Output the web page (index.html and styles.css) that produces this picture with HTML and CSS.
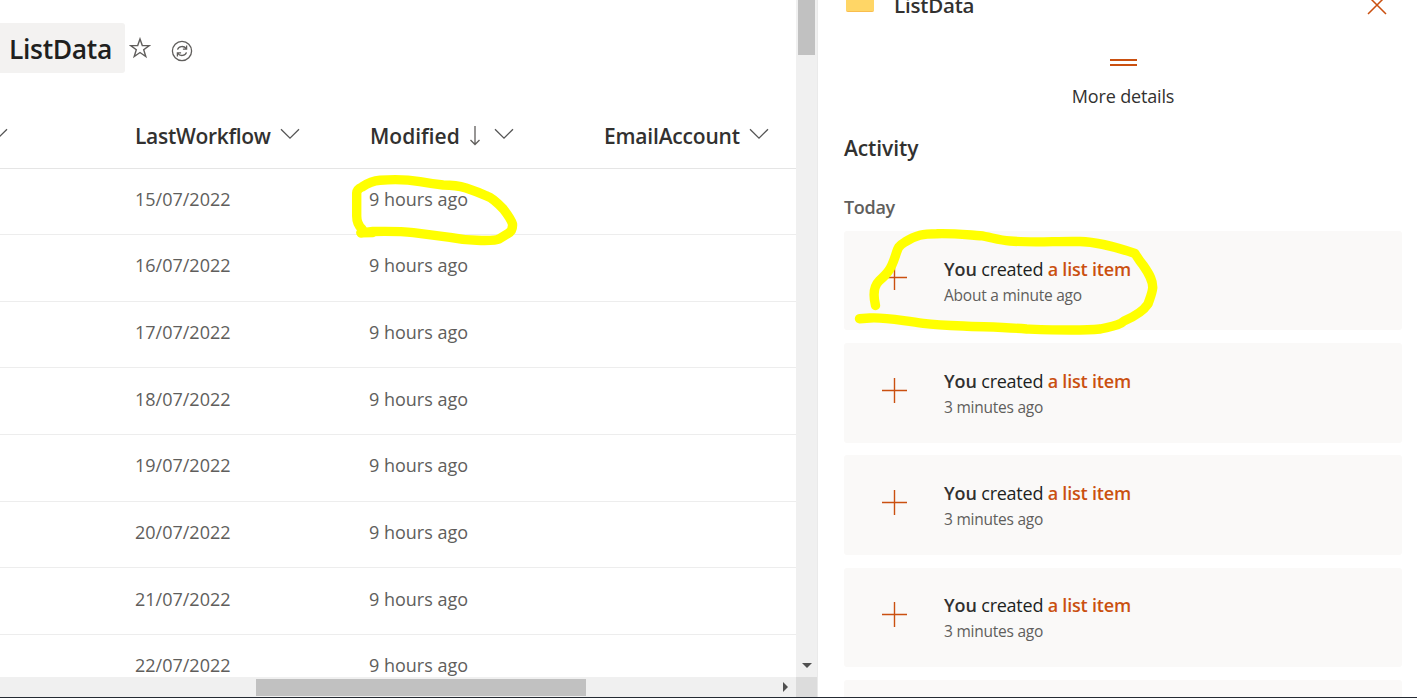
FILE: index.html
```
<!DOCTYPE html>
<html lang="en">
<head>
  <meta charset="UTF-8">
  <title>ListData</title>
  <link rel="stylesheet" href="styles.css">
</head>
<body>

  <svg class="symbols">
    <symbol id="chevron" viewBox="0 0 20 12"><path d="M1 1.2l9 9 9-9" fill="none" stroke="#555" stroke-width="1.3"/></symbol>
    <symbol id="plus" viewBox="0 0 26 26"><path d="M0 12.5h25M12.5 0v25" fill="none" stroke="#ca5010" stroke-width="1.4"/></symbol>
  </svg>

  <div class="window">
    <main class="list-page">
      <header class="list-header">
        <h1 class="list-title">ListData</h1>
        <svg class="star" width="22" height="22" viewBox="0 0 22 22"><path d="M11 2l2.300 6.600h7l-5.600 4.100 2.100 6.900L11 15.500l-5.800 4.100 2.100-6.900L1.700 8.600h7z" fill="none" stroke="#605e5c" stroke-width="1.4"/></svg>
        <svg class="sync" width="22" height="22" viewBox="0 0 22 22"><g fill="none" stroke="#605e5c" stroke-width="1.3"><circle cx="11" cy="11" r="9.600"/><path d="M6.500 9.600c1.300-3.600 6.200-4.300 8.800-.9M15.600 5.400v3.700h-3.700M15.500 12.400c-1.300 3.600-6.200 4.300-8.800.9M6.400 16.600v-3.700h3.700"/></g></svg>
      </header>

      <div class="columns">
        <div class="column column-cut"><svg class="chevron"><use href="#chevron"/></svg></div>
        <div class="column"><span class="name workflow">LastWorkflow</span><svg class="chevron"><use href="#chevron"/></svg></div>
        <div class="column"><span class="name modified">Modified</span><svg class="sort" width="12" height="20" viewBox="0 0 12 20"><path d="M6 0v18.500M1.500 14l4.500 4.500 4.500-4.500" fill="none" stroke="#605e5c" stroke-width="1.300"/></svg><svg class="chevron"><use href="#chevron"/></svg></div>
        <div class="column"><span class="name email">EmailAccount</span><svg class="chevron"><use href="#chevron"/></svg></div>
      </div>

      <div class="rows">
        <div class="row"><span></span><span class="date">15/07/2022</span><span class="ago">9 hours ago</span></div>
        <div class="row"><span></span><span class="date">16/07/2022</span><span class="ago">9 hours ago</span></div>
        <div class="row"><span></span><span class="date">17/07/2022</span><span class="ago">9 hours ago</span></div>
        <div class="row"><span></span><span class="date">18/07/2022</span><span class="ago">9 hours ago</span></div>
        <div class="row"><span></span><span class="date">19/07/2022</span><span class="ago">9 hours ago</span></div>
        <div class="row"><span></span><span class="date">20/07/2022</span><span class="ago">9 hours ago</span></div>
        <div class="row"><span></span><span class="date">21/07/2022</span><span class="ago">9 hours ago</span></div>
        <div class="row"><span></span><span class="date">22/07/2022</span><span class="ago">9 hours ago</span></div>
      </div>

      <div class="scroll-x">
        <div class="thumb-x"></div>
        <svg class="arrow-right" width="5" height="10" viewBox="0 0 5 10"><path d="M0 0l5 5-5 5z" fill="#505050"/></svg>
      </div>
    </main>

    <div class="scroll-y">
      <div class="thumb-y"></div>
      <svg class="arrow-down" width="10" height="5" viewBox="0 0 10 5"><path d="M0 0h10L5 5z" fill="#505050"/></svg>
      <div class="scroll-corner"></div>
    </div>

    <aside class="panel">
      <div class="panel-header">
        <div class="folder"></div>
        <h2 class="panel-title">ListData</h2>
        <svg class="close" width="20" height="20" viewBox="0 0 20 20"><path d="M1 1l18 18M19 1L1 19" fill="none" stroke="#ca5010" stroke-width="1.500"/></svg>
      </div>
      <div class="more">
        <div class="more-bars"></div>
        <span class="more-text">More details</span>
      </div>
      <h3 class="activity">Activity</h3>
      <h4 class="today">Today</h4>
      <div class="cards">
        <div class="card">
          <svg class="plus"><use href="#plus"/></svg>
          <div>
            <div class="event"><b class="you">You</b><span class="created">created</span><b class="item">a list item</b></div>
            <div class="time">About a minute ago</div>
          </div>
        </div>
        <div class="card">
          <svg class="plus"><use href="#plus"/></svg>
          <div>
            <div class="event"><b class="you">You</b><span class="created">created</span><b class="item">a list item</b></div>
            <div class="time">3 minutes ago</div>
          </div>
        </div>
        <div class="card">
          <svg class="plus"><use href="#plus"/></svg>
          <div>
            <div class="event"><b class="you">You</b><span class="created">created</span><b class="item">a list item</b></div>
            <div class="time">3 minutes ago</div>
          </div>
        </div>
        <div class="card">
          <svg class="plus"><use href="#plus"/></svg>
          <div>
            <div class="event"><b class="you">You</b><span class="created">created</span><b class="item">a list item</b></div>
            <div class="time">3 minutes ago</div>
          </div>
        </div>
        <div class="card"></div>
      </div>
    </aside>
  </div>

  <!-- yellow highlighter marks -->
  <svg class="marker" width="1417" height="698" viewBox="0 0 1417 698">
    <path d="M373 232.500L360.800 232.700M362 229Q356.700 224 356.700 216V193Q357 189 362 187Q371 181 380 180.300Q402 178.500 420 181.700Q433 184 443.300 185Q456 185 466 188Q478 192 486.700 196Q493 198 503.300 209Q511 219 512.500 224Q513 231 508 233.500L499 239Q495 241 476.700 240.300Q464 240 450 237.300Q431 235 413.300 232.700Q400 231 373 231.500L361 233"/>
    <path d="M875.500 305.500C873 295 873 287 879 281C888 273 891 269 895 257C898 248 898 246 905 242C916 235 923 233.700 936.700 233.700C950 233 969 235 980 235.700C990 237 998 240 1010 241C1033 243 1056 241 1080 241.500C1099 242 1116 247 1135 253.500C1138 258 1138 259 1143 265C1150 275 1153 281 1152.700 288C1152 294 1150 298 1148 304C1142 313 1131 318 1124 321C1118 327 1106 327 1100 329C1079 331 1054 330 1026.700 329C1001 327 983 327 963.300 326C939 325 929 324 923.300 323.300C902 321 886 317 870 318L859.500 318.700"/>
  </svg>

</body>
</html>
```
FILE: styles.css
```
body {
  margin: 0;
  font-family: 'Open Sans', 'Noto Sans', sans-serif;
  background-color: #fff;
  color: #323130;
  overflow: hidden;
}

h1, h2, h3, h4 {
  margin: 0;
  font-weight: 600;
}

svg {
  display: block;
  flex: none;
}

.symbols {
  display: none;
}

.window {
  display: grid;
  grid-template-columns: 796px 22px 1fr;
  box-sizing: border-box;
  height: 698px;
  border-bottom: 1px solid #252b33;
  overflow: hidden;
}

.list-page {
  display: flex;
  flex-direction: column;
  height: 697px;
  min-width: 0;
  overflow: hidden;
}

.list-header {
  display: flex;
  align-items: center;
  flex: none;
  height: 50px;
  padding-top: 23px;
}

.list-title {
  box-sizing: border-box;
  width: 125px;
  height: 50px;
  padding-left: 9px;
  background-color: #f3f2f1;
  border-radius: 0 3px 3px 0;
  color: #201f1e;
  font-size: 26.5px;
  line-height: 52px;
  letter-spacing: -0.35px;
  white-space: nowrap;
}

.star {
  margin: -1px 0 0 4px;
}

.sync {
  margin: 5px 0 0 19.5px;
}

.columns {
  display: grid;
  grid-template-columns: 135px 235px 234px 1fr;
  flex: none;
  box-sizing: border-box;
  height: 96px;
  padding-top: 30px;
  border-bottom: 1px solid #e5e5e5;
}

.column {
  display: flex;
  align-items: center;
  white-space: nowrap;
}

.column-cut .chevron {
  margin-left: -12px;
}

.name {
  margin-top: 1px;
  font-size: 21px;
  font-weight: 600;
}

.workflow {
  letter-spacing: -0.3px;
}

.modified {
  letter-spacing: 0;
}

.email {
  letter-spacing: -0.2px;
}

.chevron {
  width: 20px;
  height: 12px;
  margin: -3px 0 0 9px;
}

.sort {
  margin: 1px 4px 0 9px;
}

.sort + .chevron {
  margin-left: 9px;
}

.rows {
  flex: 1;
  min-height: 0;
  margin-top: -0.7px;
  overflow: hidden;
}

.row {
  display: grid;
  grid-template-columns: 135px 234px 1fr;
  align-items: center;
  box-sizing: border-box;
  height: 66.66px;
  padding-bottom: 5px;
  border-bottom: 1px solid #ededed;
  color: #605e5c;
  font-size: 18px;
}

.date {
  letter-spacing: 0;
}

.ago {
  letter-spacing: 0;
}

.scroll-x {
  display: flex;
  align-items: center;
  flex: none;
  height: 20px;
  background-color: #f0f0f0;
}

.thumb-x {
  width: 330px;
  height: 17px;
  margin-left: 256px;
  background-color: #c1c1c1;
}

.arrow-right {
  margin-left: 197px;
}

.scroll-y {
  display: flex;
  flex-direction: column;
  height: 697px;
  background-color: #f0f0f0;
  border-right: 1px solid #eaeaea;
}

.thumb-y {
  width: 17px;
  height: 55px;
  margin-left: 2px;
  background-color: #c1c1c1;
}

.arrow-down {
  margin: auto 0 9px 6px;
}

.scroll-corner {
  height: 20px;
  background-color: #dcdcdc;
}

.panel {
  box-sizing: border-box;
  height: 697px;
  padding: 0 15px 0 26px;
  overflow: hidden;
}

.panel-header {
  display: flex;
  height: 57px;
}

.folder {
  width: 28px;
  height: 11px;
  margin-left: 2px;
  background-color: #ffd666;
  border-bottom: 1px solid #f9bd4e;
  border-radius: 0 0 2px 2px;
}

.panel-title {
  margin: -10px 0 0 20px;
  font-size: 20.5px;
  line-height: 30px;
  letter-spacing: -0.2px;
}

.close {
  margin: -5px 15px 0 auto;
}

.more {
  display: flex;
  flex-direction: column;
  align-items: center;
}

.more-bars {
  box-sizing: border-box;
  width: 27px;
  height: 7px;
  margin-top: 2px;
  border-top: 2px solid #ca5010;
  border-bottom: 2px solid #ca5010;
}

.more-text {
  margin-top: 17px;
  font-size: 18px;
  line-height: 26px;
  letter-spacing: -0.15px;
}

.activity {
  margin-top: 24px;
  font-size: 21px;
  line-height: 30px;
  letter-spacing: -0.1px;
}

.today {
  margin-top: 31px;
  color: #605e5c;
  font-size: 18px;
  line-height: 26px;
  letter-spacing: -0.3px;
}

.cards {
  display: flex;
  flex-direction: column;
  gap: 12.8px;
  margin-top: 11px;
}

.card {
  display: flex;
  flex: none;
  box-sizing: border-box;
  height: 99.4px;
  padding: 24.8px 0 0 38px;
  background-color: #faf9f8;
  border-radius: 3px;
}

.plus {
  width: 26px;
  height: 26px;
  margin: 9.6px 36px 0 0;
}

.event {
  display: flex;
  gap: 4.5px;
  font-size: 18px;
  line-height: 27px;
}

.event b {
  font-weight: 600;
}

.you {
  letter-spacing: -0.1px;
}

.created {
  color: #201f1e;
  letter-spacing: -0.25px;
}

.item {
  color: #ca5010;
  letter-spacing: -0.2px;
}

.time {
  color: #605e5c;
  font-size: 15.5px;
  line-height: 24px;
  letter-spacing: -0.24px;
}

.marker {
  position: absolute;
  top: 0;
  left: 0;
  fill: none;
  stroke: #ff0;
  stroke-width: 9.4px;
  stroke-linecap: round;
  stroke-linejoin: round;
  pointer-events: none;
}
```
